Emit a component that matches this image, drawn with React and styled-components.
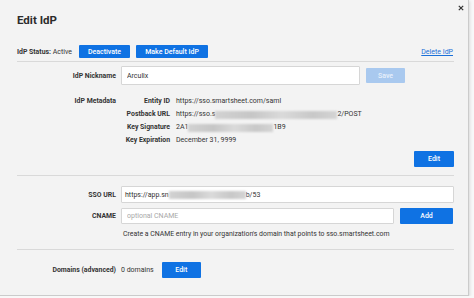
import React from 'react';
import styled, { createGlobalStyle } from 'styled-components';

const GlobalStyle = createGlobalStyle`
  html, body {
    margin: 0;
    padding: 0;
    background: #f8f8f8;
  }
  body {
    font-family: Roboto, "Liberation Sans", Arial, sans-serif;
    color: #333;
  }
`;

const App = () => {
  const metadata = [
    { key: 'Entity ID', value: <>https://sso.smartsheet.com/saml</> },
    { key: 'Postback URL', value: <>https://sso.s<Blur $w={122} />2/POST</> },
    { key: 'Key Signature', value: <>2A1<Blur $w={85} />1B9</> },
    { key: 'Key Expiration', value: <>December 31, 9999</> },
  ];

  return (
    <>
      <GlobalStyle />
      <Dialog>
        <Header>
          <Title>Edit IdP</Title>
          <CloseButton aria-label="Close">
            <svg width="6" height="6" viewBox="0 0 6 6">
              <path d="M0.8 0.8 L5.2 5.2 M5.2 0.8 L0.8 5.2" stroke="#333" strokeWidth="1.2" />
            </svg>
          </CloseButton>
        </Header>

        <StatusRow>
          <StatusText><b>IdP Status:</b> Active</StatusText>
          <Button $w={51} $h={13}>Deactivate</Button>
          <Button $w={72} $h={13}>Make Default IdP</Button>
          <DeleteLink href="#">Delete IdP</DeleteLink>
        </StatusRow>
        <Divider $top={3} />

        <FormRow $top={4}>
          <Label>IdP Nickname</Label>
          <Field>
            <Input $w={239} $h={19} defaultValue="Arculix" />
            <Button $w={39} $h={15} disabled>Save</Button>
          </Field>
        </FormRow>

        <FormRow $top={10} $align="start">
          <Label $lh={13}>IdP Metadata</Label>
          <MetaGrid>
            {metadata.map((m) => (
              <React.Fragment key={m.key}>
                <MetaKey>{m.key}</MetaKey>
                <MetaValue>{m.value}</MetaValue>
              </React.Fragment>
            ))}
          </MetaGrid>
        </FormRow>
        <RightActions>
          <Button $w={40} $h={16}>Edit</Button>
        </RightActions>
        <Divider $top={8} />

        <FormRow $top={10}>
          <Label>SSO URL</Label>
          <Field>
            <FakeInput $w={333} $h={17}>
              https://app.sn<Blur $w={77} />b/53
            </FakeInput>
          </Field>
        </FormRow>
        <FormRow $top={5}>
          <Label>CNAME</Label>
          <Field>
            <Input $w={273} $h={16} placeholder="optional CNAME" />
            <Button $w={53} $h={16}>Add</Button>
          </Field>
        </FormRow>
        <Help>Create a CNAME entry in your organization's domain that points to sso.smartsheet.com</Help>
        <Divider $top={9} />

        <FormRow $top={12}>
          <Label>Domains (advanced)</Label>
          <Field>
            <Plain>0 domains</Plain>
            <Button $w={39} $h={16}>Edit</Button>
          </Field>
        </FormRow>
      </Dialog>
    </>
  );
};

export default App;

const Dialog = styled.div`
  width: 469px;
  box-sizing: border-box;
  background: #f3f3f3;
  border-right: 1px solid #cbcbcb;
  border-bottom: 1px solid #cbcbcb;
  box-shadow: 1px 1px 3px rgba(0, 0, 0, 0.12);
  padding: 0 14px 17px 17px;
  display: flex;
  flex-direction: column;
`;

const Header = styled.div`
  display: flex;
  justify-content: space-between;
  align-items: flex-start;
`;

const Title = styled.h1`
  margin: 13px 0 0;
  font-size: 11.5px;
  line-height: 14px;
  font-weight: 700;
  color: #2b2b2b;
`;

const CloseButton = styled.button`
  background: none;
  border: none;
  padding: 0;
  margin: 5px -10px 0 0;
  width: 6px;
  height: 6px;
  display: flex;
  cursor: pointer;
`;

const StatusRow = styled.div`
  margin-top: 18px;
  height: 13px;
  display: flex;
  align-items: center;
  gap: 6px;
`;

const StatusText = styled.span`
  font-size: 7px;
  color: #333;
  margin-right: 1px;

  b {
    font-weight: 700;
    font-size: 6.9px;
  }
`;

const DeleteLink = styled.a`
  margin-left: auto;
  font-size: 7px;
  color: #1a6fd8;
  text-decoration: underline;
  margin-right: 1px;
`;

const Divider = styled.hr`
  border: none;
  border-top: 1px solid #d9d9d9;
  margin: ${(p) => p.$top}px 0 0;
  width: 437px;
`;

const FormRow = styled.div`
  margin-top: ${(p) => p.$top}px;
  display: grid;
  grid-template-columns: 99px 1fr;
  column-gap: 5px;
  align-items: ${(p) => p.$align || 'center'};
`;

const Label = styled.div`
  text-align: right;
  font-size: 6.9px;
  font-weight: 700;
  color: #333;
  line-height: ${(p) => (p.$lh ? `${p.$lh}px` : 'normal')};
`;

const Field = styled.div`
  display: flex;
  align-items: center;
  gap: 6px;
`;

const Button = styled.button`
  width: ${(p) => p.$w}px;
  height: ${(p) => p.$h}px;
  padding: 0;
  border: none;
  border-radius: 1px;
  background: #0f72e3;
  color: #fff;
  font-family: Roboto, "Liberation Sans", Arial, sans-serif;
  font-size: 7px;
  font-weight: 500;
  cursor: pointer;

  &:disabled {
    background: #a9c9ef;
    color: #e8f0fb;
    cursor: default;
  }
`;

const Input = styled.input`
  width: ${(p) => p.$w}px;
  height: ${(p) => p.$h}px;
  box-sizing: border-box;
  border: 1px solid #d6d6d6;
  border-radius: 1px;
  background: #fff;
  padding: 0 0 0 5px;
  font-family: Roboto, "Liberation Sans", Arial, sans-serif;
  font-size: 7px;
  color: #333;
  outline: none;

  &::placeholder {
    color: #a8a8a8;
  }
`;

const FakeInput = styled.div`
  width: ${(p) => p.$w}px;
  height: ${(p) => p.$h}px;
  box-sizing: border-box;
  border: 1px solid #d6d6d6;
  border-radius: 1px;
  background: #fff;
  padding: 0 0 0 3px;
  font-size: 7px;
  color: #333;
  display: flex;
  align-items: center;
`;

const Blur = styled.span`
  display: inline-block;
  width: ${(p) => p.$w}px;
  height: 8px;
  vertical-align: middle;
  background: linear-gradient(90deg, #d2d2d2, #c6c6c6 30%, #dadada 55%, #c8c8c8 80%, #d4d4d4);
  filter: blur(1.2px);
`;

const MetaGrid = styled.div`
  display: grid;
  grid-template-columns: 49px auto;
  column-gap: 6px;
  justify-content: start;
`;

const MetaKey = styled.div`
  text-align: right;
  font-size: 6.9px;
  font-weight: 700;
  line-height: 13px;
  white-space: nowrap;
  color: #333;
`;

const MetaValue = styled.div`
  font-size: 7px;
  line-height: 13px;
  white-space: nowrap;
  color: #333;
  display: flex;
  align-items: center;
`;

const RightActions = styled.div`
  margin-top: 4px;
  width: 437px;
  display: flex;
  justify-content: flex-end;
`;

const Help = styled.div`
  margin: 4px 0 0 106px;
  font-size: 6.9px;
  line-height: 12px;
  color: #333;
`;

const Plain = styled.span`
  font-size: 7px;
  color: #333;
  margin-right: 2px;
`;
